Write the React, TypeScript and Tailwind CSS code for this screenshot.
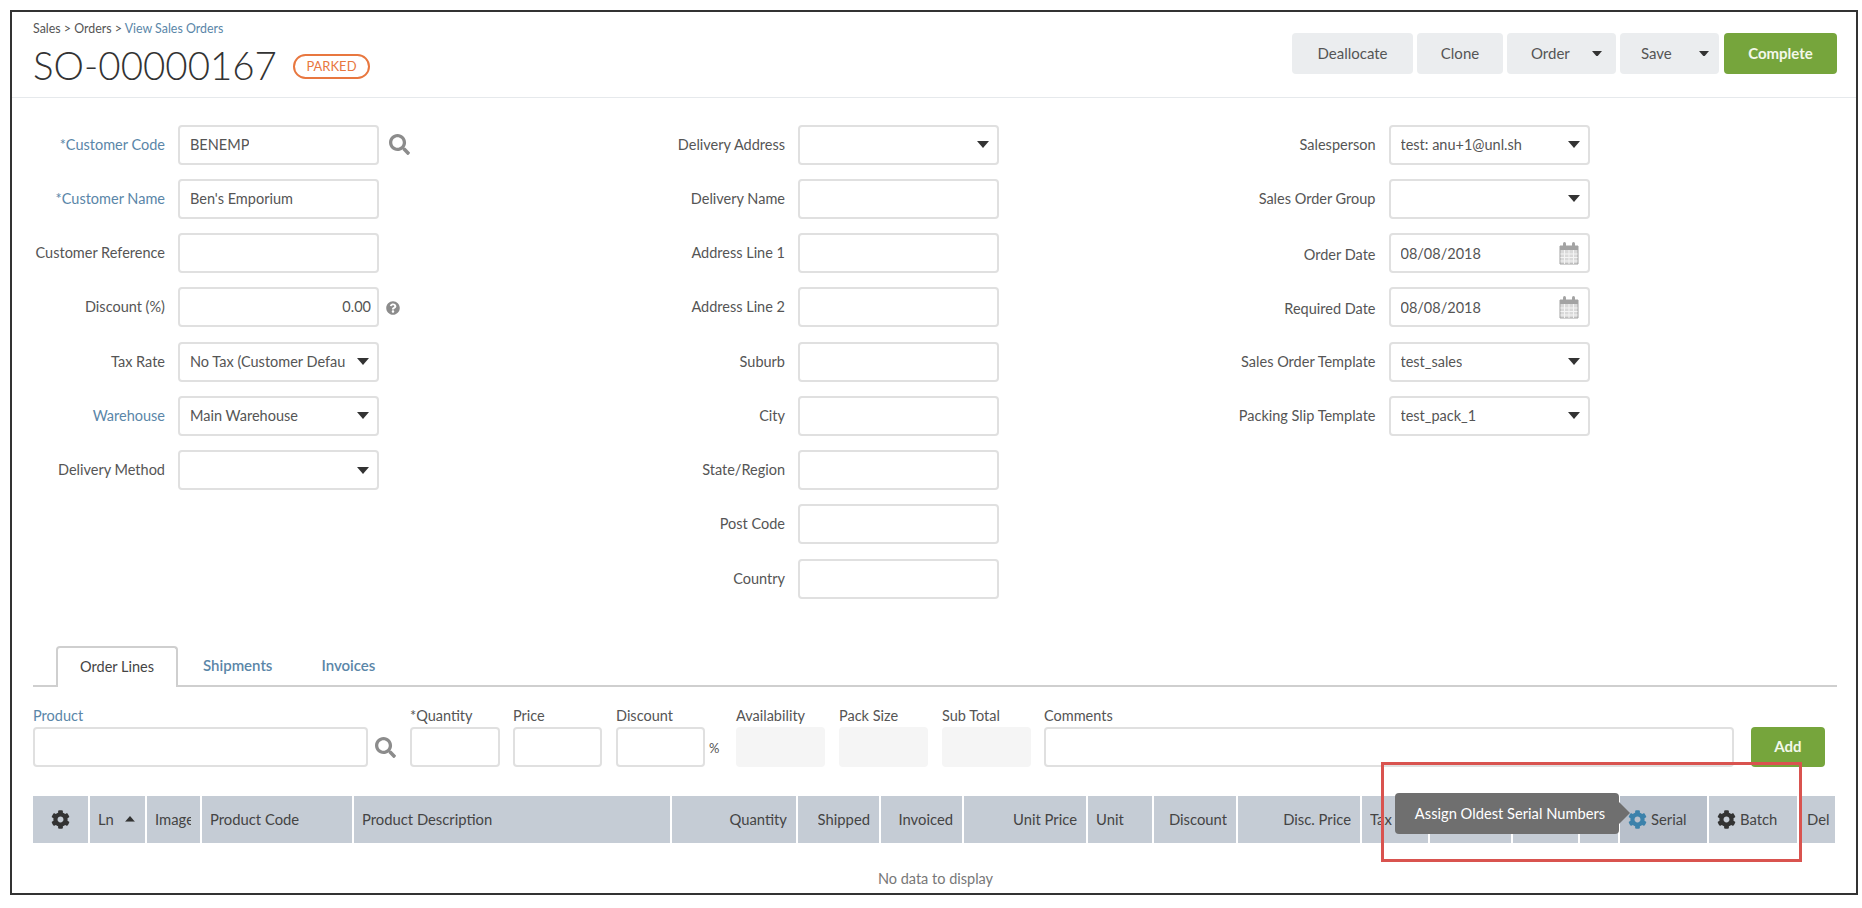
import { FaCog, FaQuestionCircle, FaSearch } from "react-icons/fa";

const LINK = "text-[#5a86a8]";

function Caret({ className = "text-[#333]", width = 12 }: { className?: string; width?: number }) {
  return (
    <svg width={width} height={(width * 7) / 12} viewBox="0 0 12 7" className={className}>
      <path d="M0 0h12L6 7z" fill="currentColor" />
    </svg>
  );
}

function CalendarIcon() {
  return (
    <svg width="20" height="24" viewBox="0 0 20 24" className="text-[#a3a3a3]">
      <path d="M1 5h18v18H1z" fill="#d9d9d9" stroke="currentColor" />
      <path d="M1 5h18v4H1z" fill="currentColor" />
      <path
        d="M1.5 13h17M1.5 16.500h17M1.500 20h17M5.500 9v14M10 9v14M14.500 9v14"
        stroke="#f4f4f4"
        strokeWidth="1"
      />
      <rect x="4" y="1" width="3" height="6" rx="1.500" fill="currentColor" />
      <rect x="13" y="1" width="3" height="6" rx="1.500" fill="currentColor" />
    </svg>
  );
}

function Box({
  children,
  className = "",
}: {
  children?: React.ReactNode;
  className?: string;
}) {
  return (
    <div
      className={`flex h-10 items-center rounded border-2 border-[#e0e0e0] bg-white text-[14.500px] text-[#555] ${className}`}
    >
      {children}
    </div>
  );
}

function Row({
  label,
  labelWidth,
  link,
  value,
  kind = "text",
  right,
  after,
}: {
  label: string;
  labelWidth: string;
  link?: boolean;
  value?: string;
  kind?: "text" | "select" | "date";
  right?: boolean;
  after?: React.ReactNode;
}) {
  return (
    <div className="flex items-center">
      <div
        className={`${labelWidth} text-right text-[14.500px] ${link ? LINK : "text-[#555]"} ${
          kind === "date" ? "pt-[4px]" : ""
        }`}
      >
        {label}
      </div>
      <Box className="ml-[13px] w-[201px] justify-between pl-[10px] pr-[6px]">
        <span
          className={`overflow-hidden whitespace-nowrap ${right ? "w-full text-right" : ""} ${
            kind === "date" ? "pt-[2px]" : ""
          }`}
        >
          {value}
        </span>
        {kind === "select" && (
          <span className="ml-2 shrink-0 pr-[2px]">
            <Caret />
          </span>
        )}
        {kind === "date" && (
          <span className="shrink-0 pr-[3px]">
            <CalendarIcon />
          </span>
        )}
      </Box>
      {after}
    </div>
  );
}

const COLUMN_ONE = [
  { label: "*Customer Code", link: true, value: "BENEMP", search: true },
  { label: "*Customer Name", link: true, value: "Ben's Emporium" },
  { label: "Customer Reference" },
  { label: "Discount (%)", value: "0.00", right: true, help: true },
  { label: "Tax Rate", value: "No Tax (Customer Defau", kind: "select" as const },
  { label: "Warehouse", link: true, value: "Main Warehouse", kind: "select" as const },
  { label: "Delivery Method", kind: "select" as const },
];

const COLUMN_TWO = [
  { label: "Delivery Address", kind: "select" as const },
  { label: "Delivery Name" },
  { label: "Address Line 1" },
  { label: "Address Line 2" },
  { label: "Suburb" },
  { label: "City" },
  { label: "State/Region" },
  { label: "Post Code" },
  { label: "Country" },
];

const COLUMN_THREE = [
  { label: "Salesperson", value: "test: anu+1@unl.sh", kind: "select" as const },
  { label: "Sales Order Group", kind: "select" as const },
  { label: "Order Date", value: "08/08/2018", kind: "date" as const },
  { label: "Required Date", value: "08/08/2018", kind: "date" as const },
  { label: "Sales Order Template", value: "test_sales", kind: "select" as const },
  { label: "Packing Slip Template", value: "test_pack_1", kind: "select" as const },
];

const TABLE_COLUMNS = [
  { w: "w-[57px]", align: "justify-center", gear: "text-[#333]" },
  { w: "w-[57px]", label: "Ln", sort: true },
  { w: "w-[55px]", label: "Image" },
  { w: "w-[152px]", label: "Product Code" },
  { w: "w-[318px]", label: "Product Description" },
  { w: "w-[126px]", label: "Quantity", align: "justify-end" },
  { w: "w-[83px]", label: "Shipped", align: "justify-end" },
  { w: "w-[83px]", label: "Invoiced", align: "justify-end" },
  { w: "w-[124px]", label: "Unit Price", align: "justify-end" },
  { w: "w-[66px]", label: "Unit" },
  { w: "w-[84px]", label: "Discount", align: "justify-end" },
  { w: "w-[124px]", label: "Disc. Price", align: "justify-end" },
  { w: "w-[68px]", label: "Tax" },
  { w: "w-[83px]" },
  { w: "w-[67px]" },
  { w: "w-[40px]" },
  { w: "w-[89px]", label: "Serial", gear: "text-[#3c82ab]", active: true },
  { w: "w-[90px]", label: "Batch", gear: "text-[#333]" },
  { w: "w-[36px]", label: "Del", last: true },
];

function FieldLabel({ link, children }: { link?: boolean; children: React.ReactNode }) {
  return (
    <div className={`mb-[1px] h-[20px] whitespace-nowrap text-[14.500px] leading-[20px] ${link ? LINK : "text-[#555]"}`}>
      {children}
    </div>
  );
}

export default function App() {
  return (
    <div className="h-[908px] w-[1862px] overflow-hidden bg-white pl-[10px] pt-[10px] font-['Lato','Open_Sans',sans-serif]">
      <div className="h-[885px] w-[1848px] border-2 border-[#333] bg-white">
        {/* header */}
        <div className="flex h-[85.500px] justify-between border-b border-[#e6e9ec] pl-[21px] pr-[19px]">
          <div>
            <div className="mt-[10px] text-[12.400px] leading-[14px] text-[#555]">
              Sales &gt; Orders &gt; <span className={LINK}>View Sales Orders</span>
            </div>
            <div className="mt-[5px] flex items-center">
              <span className="text-[38.500px] font-light leading-[48px] text-[#333]">SO-00000167</span>
              <span className="ml-[16px] mt-[3px] flex h-[25px] w-[77px] items-center justify-center rounded-full border-2 border-[#e8773f] text-[13px] text-[#e8773f]">
                PARKED
              </span>
            </div>
          </div>
          <div className="mt-[21px] flex h-[41px] gap-[4px] text-[15px] text-[#555]">
            <button className="w-[121px] rounded bg-[#ebedef]">Deallocate</button>
            <button className="w-[86px] rounded bg-[#ebedef]">Clone</button>
            <button className="flex w-[109px] items-center justify-between rounded bg-[#ebedef] pl-[24px] pr-[14px]">
              Order
              <Caret width={10} />
            </button>
            <button className="flex w-[99px] items-center justify-between rounded bg-[#ebedef] pl-[21px] pr-[10px]">
              Save
              <Caret width={10} />
            </button>
            <button className="ml-[1px] w-[113px] rounded bg-[#76a53c] font-bold text-[#f3f8ea]">Complete</button>
          </div>
        </div>

        {/* form */}
        <div className="flex pl-[21px] pt-[27px]">
          <div className="flex w-[567px] flex-col gap-[14.250px]">
            {COLUMN_ONE.map((f) => (
              <Row
                key={f.label}
                label={f.label}
                labelWidth="w-[132px]"
                link={f.link}
                value={f.value}
                kind={f.kind}
                right={f.right}
                after={
                  f.search ? (
                    <FaSearch className="ml-[10px] text-[21px] text-[#8c8c8c]" />
                  ) : f.help ? (
                    <FaQuestionCircle className="ml-[7px] mt-[2px] text-[14px] text-[#8c8c8c]" />
                  ) : undefined
                }
              />
            ))}
          </div>
          <div className="flex w-[600.500px] flex-col gap-[14.250px]">
            {COLUMN_TWO.map((f) => (
              <Row key={f.label} label={f.label} labelWidth="w-[185px]" kind={f.kind} />
            ))}
          </div>
          <div className="flex flex-col gap-[14.250px]">
            {COLUMN_THREE.map((f) => (
              <Row key={f.label} label={f.label} labelWidth="w-[175px]" value={f.value} kind={f.kind} />
            ))}
          </div>
        </div>

        {/* tabs */}
        <div className="ml-[21px] mr-[19px] mt-[47px] flex h-[41px] border-b-2 border-[#cfcfcf] pl-[23px] text-[14.500px]">
          <div className="-mb-[2px] flex h-[41px] w-[122px] items-center justify-center rounded-t border-2 border-b-0 border-[#cfcfcf] bg-white text-[#444]">
            Order Lines
          </div>
          <div className={`ml-[25px] flex items-center text-[15px] font-semibold ${LINK}`}>Shipments</div>
          <div className={`ml-[49px] flex items-center text-[15px] font-semibold ${LINK}`}>Invoices</div>
        </div>

        {/* add line form */}
        <div className="ml-[21px] mt-[19px] flex items-end">
          <div className="w-[335px]">
            <FieldLabel link>Product</FieldLabel>
            <Box />
          </div>
          <FaSearch className="mb-[9px] ml-[7px] text-[21px] text-[#8c8c8c]" />
          <div className="ml-[14px] w-[90px]">
            <FieldLabel>*Quantity</FieldLabel>
            <Box />
          </div>
          <div className="ml-[13px] w-[89px]">
            <FieldLabel>Price</FieldLabel>
            <Box />
          </div>
          <div className="ml-[14px] w-[89px]">
            <FieldLabel>Discount</FieldLabel>
            <Box />
          </div>
          <div className="mb-[8px] ml-[4px] w-[27px] text-[13px] text-[#555]">%</div>
          {["Availability", "Pack Size", "Sub Total"].map((label, i) => (
            <div key={label} className={`w-[89px] ${i > 0 ? "ml-[14px]" : ""}`}>
              <FieldLabel>{label}</FieldLabel>
              <div className="h-10 rounded bg-[#f5f5f5]" />
            </div>
          ))}
          <div className="ml-[13px] w-[690px]">
            <FieldLabel>Comments</FieldLabel>
            <Box />
          </div>
          <button className="ml-[17px] h-10 w-[74px] rounded bg-[#76a53c] text-[15px] font-bold text-[#f3f8ea]">
            Add
          </button>
        </div>

        {/* table */}
        <div className="relative ml-[21px] mt-[29px]">
          <div className="flex h-[47px] text-[14.800px] text-[#444]">
            {TABLE_COLUMNS.map((c, i) => (
              <div
                key={i}
                className={`flex shrink-0 items-center whitespace-nowrap pl-[8px] ${c.w} ${c.align ?? ""} ${
                  c.active ? "bg-[#b8c0cb]" : "bg-[#c5ccd5]"
                } ${c.last ? "" : "border-r-2 border-white pr-[9px]"}`}
              >
                {c.gear && <FaCog className={`shrink-0 text-[19px] ${c.gear} ${c.label ? "mr-[4px]" : ""}`} />}
                {c.label && <span className="overflow-hidden">{c.label}</span>}
                {c.sort && (
                  <span className="ml-[11px]">
                    <Caret className="rotate-180 text-[#333]" width={10} />
                  </span>
                )}
              </div>
            ))}
          </div>
          <div className="mr-[18px] mt-[25px] text-center text-[14.500px] text-[#777]">No data to display</div>

          {/* tooltip */}
          <div className="absolute left-[1362px] top-[-3px] flex h-[41px] w-[224px] items-center justify-center rounded bg-[#6f6f6f] pl-[6px] text-[14.700px] text-white">
            Assign Oldest Serial Numbers
            <span className="absolute left-full top-[9px] border-y-[11px] border-l-[11px] border-y-transparent border-l-[#6f6f6f]" />
          </div>

          {/* annotation */}
          <div className="pointer-events-none absolute left-[1348px] top-[-34px] h-[100px] w-[421px] border-[3px] border-[#d9534f]" />
        </div>
      </div>
    </div>
  );
}
